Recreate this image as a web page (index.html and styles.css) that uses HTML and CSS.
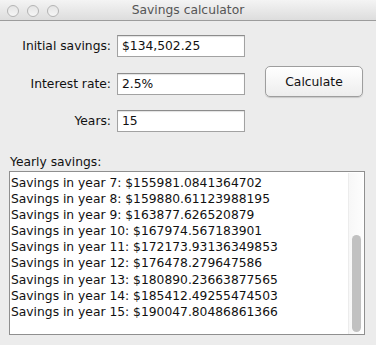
FILE: index.html
```html
<!DOCTYPE html>
<html lang="en">
<head>
  <meta charset="UTF-8">
  <title>Savings calculator</title>
  <link rel="stylesheet" href="styles.css">
</head>
<body>

  <div class="titlebar">
    <div class="lights">
      <span class="light"></span>
      <span class="light"></span>
      <span class="light"></span>
    </div>
    <div class="title">Savings calculator</div>
  </div>

  <div class="form">
    <label class="label" for="initial">Initial savings:</label>
    <input class="field" type="text" id="initial" value="$134,502.25">
    <button class="calc">Calculate</button>

    <label class="label" for="rate">Interest rate:</label>
    <input class="field" type="text" id="rate" value="2.5%">

    <label class="label" for="years">Years:</label>
    <input class="field" type="text" id="years" value="15">
  </div>

  <div class="output">
    <div class="output-label">Yearly savings:</div>
    <div class="list-box">
      <div class="lines">
        <div>Savings in year 7: $155981.0841364702</div>
        <div>Savings in year 8: $159880.61123988195</div>
        <div>Savings in year 9: $163877.626520879</div>
        <div>Savings in year 10: $167974.567183901</div>
        <div>Savings in year 11: $172173.93136349853</div>
        <div>Savings in year 12: $176478.279647586</div>
        <div>Savings in year 13: $180890.23663877565</div>
        <div>Savings in year 14: $185412.49255474503</div>
        <div>Savings in year 15: $190047.80486861366</div>
      </div>
      <div class="scroll-track">
        <div class="scroll-thumb"></div>
      </div>
    </div>
  </div>

</body>
</html>
```

FILE: styles.css
```css
body {
  margin: 0;
  background-color: #ececec;
  font-family: 'DejaVu Sans', sans-serif;
  font-size: 12.3px;
  color: #111;
}

.titlebar {
  position: relative;
  height: 20px;
  border-bottom: 1px solid #9c9c9c;
  background: linear-gradient(#f4f4f4, #dddddd);
}

.lights {
  position: absolute;
  left: 7px;
  top: 5px;
  display: flex;
  gap: 8px;
}

.light {
  width: 10px;
  height: 10px;
  border-radius: 50%;
  border: 1px solid #b4b4b4;
  background: linear-gradient(#e4e4e4, #f6f6f6);
}

.title {
  text-align: center;
  line-height: 21px;
  color: #555;
}

.form {
  display: grid;
  grid-template-columns: 111px 128px 112px;
  grid-template-rows: 22px 22px 22px;
  column-gap: 6px;
  row-gap: 15.5px;
  margin-top: 14px;
  align-items: center;
}

.label {
  text-align: right;
}

.field {
  box-sizing: border-box;
  height: 22px;
  margin: 0;
  padding: 0 4px;
  border: 1px solid #a2a2a2;
  border-top-color: #8c8c8c;
  box-shadow: inset 0 1px 1px rgba(0, 0, 0, 0.12);
  background: #fff;
  font-family: inherit;
  font-size: 12.3px;
  color: #111;
  outline: none;
}

.calc {
  grid-column: 3;
  grid-row: 1 / 4;
  align-self: start;
  width: 98px;
  height: 31px;
  margin: 31px 0 0 14px;
  padding: 0;
  border: 1px solid #9e9e9e;
  border-radius: 5px;
  background: linear-gradient(#ffffff, #ededed);
  box-shadow: 0 1px 1px rgba(0, 0, 0, 0.15);
  font-family: inherit;
  font-size: 12.3px;
  color: #111;
}

.output {
  padding: 0 11px 0 9px;
  margin-top: 22px;
}

.output-label {
  line-height: 16px;
  margin-bottom: 1px;
  padding-left: 1px;
}

.list-box {
  display: flex;
  height: 162px;
  border: 1px solid #8f8f8f;
  background: #fff;
}

.lines {
  flex: 1;
  padding: 3px 0 0 1px;
  line-height: 16.1px;
  white-space: nowrap;
  overflow: hidden;
}

.scroll-track {
  width: 14px;
  margin-top: 1px;
  margin-right: 1px;
  border-left: 1px solid #ececec;
  background: linear-gradient(90deg, #f7f7f7, #fdfdfd);
}

.scroll-thumb {
  width: 9px;
  height: 97px;
  margin: 62px 0 0 3px;
  border-radius: 5px;
  background: #c1c1c1;
}
```
